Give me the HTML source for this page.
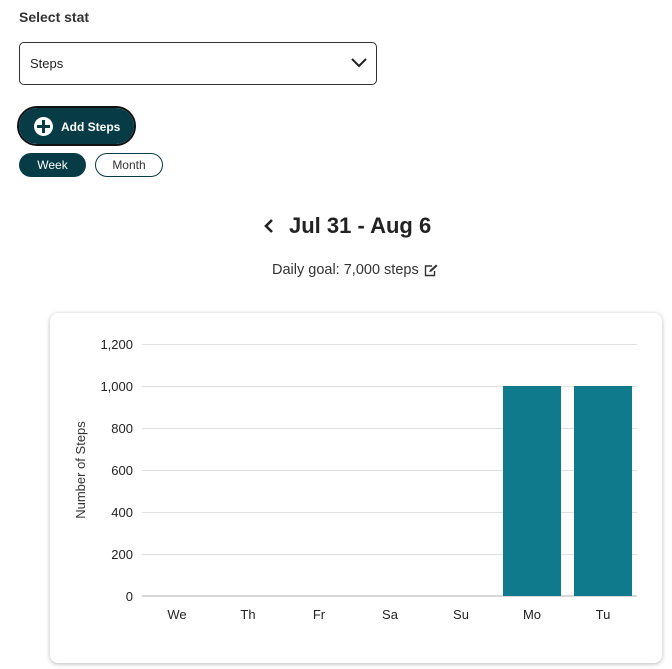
<!DOCTYPE html>
<html><head><meta charset="utf-8"><style>
*{box-sizing:border-box;margin:0;padding:0}
body{width:672px;height:669px;background:#fff;font-family:"Liberation Sans",sans-serif;color:#222;position:relative;overflow:hidden}
.a{position:absolute}
</style></head><body>
<div class="a" style="left:19px;top:9px;font-size:14px;font-weight:bold;color:#333">Select stat</div>
<div class="a" style="left:19px;top:42px;width:358px;height:43px;border:1px solid #333;border-radius:5px;"></div>
<div class="a" style="left:30px;top:56px;font-size:13px;color:#222">Steps</div>
<svg class="a" style="left:350px;top:57px" width="18" height="12" viewBox="0 0 18 12"><path d="M2 2 L9 9 L16 2" fill="none" stroke="#222" stroke-width="2"/></svg>
<div class="a" style="left:17px;top:106px;width:119px;height:40px;border:2px solid #111;border-radius:20px;background:#fff"></div>
<div class="a" style="left:19px;top:108px;width:115px;height:36px;border-radius:18px;background:#073b45"></div>
<div class="a" style="left:34px;top:117px;width:19px;height:19px;border-radius:50%;background:#fff"></div>
<div class="a" style="left:37px;top:125px;width:13px;height:3px;background:#073b45"></div>
<div class="a" style="left:42px;top:120px;width:3px;height:13px;background:#073b45"></div>
<div class="a" style="left:61px;top:120px;font-size:12px;font-weight:bold;color:#fff">Add Steps</div>
<div class="a" style="left:19px;top:153px;width:67px;height:24px;border-radius:12px;background:#073b45;color:#fff;font-size:12px;text-align:center;line-height:25px">Week</div>
<div class="a" style="left:95px;top:153px;width:68px;height:24px;border-radius:12px;border:1px solid #073b45;color:#333;font-size:12px;text-align:center;line-height:23px">Month</div>
<svg class="a" style="left:263px;top:218px" width="12" height="16" viewBox="0 0 12 16"><path d="M9 2 L3 8 L9 14" fill="none" stroke="#222" stroke-width="2.6"/></svg>
<div class="a" style="left:289px;top:213px;font-size:22px;font-weight:bold;color:#222">Jul 31 - Aug 6</div>
<div class="a" style="left:272px;top:262px;font-size:14.5px;color:#333">Daily goal: 7,000 steps</div>
<svg class="a" style="left:424px;top:264px" width="14" height="13" viewBox="0 0 14 13"><path d="M8 2 H1.5 V11.5 H10.5 V7" fill="none" stroke="#333" stroke-width="1.4"/><path d="M5 8 L6 6 L12 0.5 L13.5 2 L7.5 7.5 Z" fill="#333"/></svg>
<div class="a" style="left:50px;top:313px;width:612px;height:350px;border-radius:8px;background:#fff;box-shadow:0 1px 5px rgba(0,0,0,.28)"></div>
<svg class="a" style="left:0;top:0" width="672" height="669">
<g stroke="#e0e0e0" stroke-width="1">
<line x1="142" x2="637" y1="344.5" y2="344.5"/><line x1="142" x2="637" y1="386.5" y2="386.5"/>
<line x1="142" x2="637" y1="428.5" y2="428.5"/><line x1="142" x2="637" y1="470.5" y2="470.5"/>
<line x1="142" x2="637" y1="512.5" y2="512.5"/><line x1="142" x2="637" y1="554.5" y2="554.5"/>
</g>
<line x1="142" x2="637" y1="596" y2="596" stroke="#d8d8d8" stroke-width="2"/>
<rect x="503" y="386" width="58" height="210" fill="#0f7a8c"/>
<rect x="574" y="386" width="58" height="210" fill="#0f7a8c"/>
<g font-family="Liberation Sans,sans-serif" font-size="13" fill="#222" text-anchor="end">
<text x="133" y="349">1,200</text><text x="133" y="391">1,000</text><text x="133" y="433">800</text>
<text x="133" y="475">600</text><text x="133" y="517">400</text><text x="133" y="559">200</text><text x="133" y="601">0</text>
</g>
<g font-family="Liberation Sans,sans-serif" font-size="13" fill="#222" text-anchor="middle">
<text x="177" y="619">We</text><text x="248" y="619">Th</text><text x="319" y="619">Fr</text><text x="390" y="619">Sa</text>
<text x="461" y="619">Su</text><text x="532" y="619">Mo</text><text x="603" y="619">Tu</text>
</g>
<text transform="translate(85,470) rotate(-90)" font-family="Liberation Sans,sans-serif" font-size="13" fill="#333" text-anchor="middle">Number of Steps</text>
</svg>
</body></html>
